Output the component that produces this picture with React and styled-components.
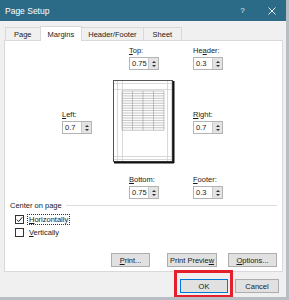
import styled, { createGlobalStyle } from 'styled-components';

const GlobalStyle = createGlobalStyle`
  html, body {
    margin: 0;
    padding: 0;
    background: #b9bec4;
  }
  body {
    font-family: "Liberation Sans", Arial, sans-serif;
    font-size: 7.5px;
    color: #1a1a1a;
  }
`;

const Dialog = styled.div`
  position: relative;
  width: 286px;
  height: 297px;
  background: #f0f0f0;
  display: flex;
  flex-direction: column;
  box-sizing: border-box;
`;

const TitleBar = styled.div`
  height: 21px;
  background: #2b6b87;
  color: #fff;
  display: flex;
  align-items: center;
  padding: 0 0 0 5px;
  font-size: 8.5px;
`;

const TitleText = styled.span`
  flex: 1;
`;

const TitleIcon = styled.span`
  width: 29px;
  display: flex;
  justify-content: center;
  color: #e6eef2;
  font-size: 8px;
`;

const Tabs = styled.div`
  display: flex;
  align-items: flex-end;
  height: 19px;
  padding-left: 5px;
`;

const Tab = styled.div`
  height: ${p => (p.$active ? '15px' : '13px')};
  padding: 0 ${p => p.$pad}px;
  display: flex;
  align-items: center;
  justify-content: center;
  background: ${p => (p.$active ? '#fff' : '#f0f0f0')};
  border: 1px solid #d9d9d9;
  border-bottom: none;
  margin-left: ${p => (p.$first ? '0' : '-1px')};
  box-sizing: border-box;
  position: relative;
  z-index: ${p => (p.$active ? 2 : 1)};
  margin-bottom: ${p => (p.$active ? '-1px' : '0')};
`;

const Panel = styled.div`
  margin: 0 4px;
  width: 279px;
  height: 232px;
  background: #fff;
  border: 1px solid #d9d9d9;
  box-sizing: border-box;
  display: flex;
  flex-direction: column;
`;

const MarginGrid = styled.div`
  display: grid;
  grid-template-columns: 51px 61px 19px auto;
  padding: 5px 0 0 57px;
`;

const Field = styled.div`
  display: flex;
  flex-direction: column;
  grid-column: ${p => p.$col};
  grid-row: ${p => p.$row || 'auto'};
  margin-left: ${p => p.$indent || 0}px;
  align-self: ${p => p.$align || 'start'};
  margin-top: ${p => p.$top || 0}px;
`;

const Label = styled.div`
  height: 10px;
  line-height: 10px;
`;

const Spinner = styled.div`
  margin-top: 1px;
  width: 30px;
  height: 13px;
  border: 1px solid #b4b4b4;
  box-sizing: border-box;
  display: flex;
`;

const SpinValue = styled.div`
  flex: 1;
  padding-left: 2px;
  line-height: 11px;
`;

const SpinArrows = styled.div`
  width: 9px;
  background: #e3e3e3;
  border-left: 1px solid #c8c8c8;
  display: flex;
  flex-direction: column;
  align-items: center;
  justify-content: center;
  gap: 2px;
`;

const Arrow = styled.span`
  width: 0;
  height: 0;
  border-left: 2px solid transparent;
  border-right: 2px solid transparent;
  ${p => (p.$down ? 'border-top: 2px solid #333;' : 'border-bottom: 2px solid #333;')}
`;

const Preview = styled.svg`
  grid-column: 2;
  grid-row: 2;
  margin-top: 10px;
  display: block;
`;

const Group = styled.div`
  margin-top: 1px;
  padding: 0 5px;
`;

const Legend = styled.div`
  display: flex;
  align-items: center;
  gap: 4px;
  height: 10px;
  &::after {
    content: '';
    flex: 1;
    height: 1px;
    background: #dcdcdc;
  }
`;

const CheckRow = styled.div`
  display: flex;
  align-items: center;
  gap: 3px;
  margin-left: 5px;
  margin-top: ${p => p.$top}px;
  height: 11px;
`;

const Box = styled.span`
  width: 9px;
  height: 9px;
  border: 1px solid #333;
  box-sizing: border-box;
  background: #fff;
  display: flex;
  align-items: center;
  justify-content: center;
`;

const CheckText = styled.span`
  padding: 0 1px;
  border: 1px dotted ${p => (p.$focus ? '#333' : 'transparent')};
  line-height: 9px;
`;

const ButtonRow = styled.div`
  display: flex;
  justify-content: flex-end;
  gap: ${p => p.$gap || 11}px;
  padding-right: ${p => p.$right}px;
  margin-top: ${p => p.$top}px;
`;

const Button = styled.div`
  width: ${p => p.$w}px;
  height: 14px;
  box-sizing: border-box;
  background: #e1e1e1;
  border: 1px solid ${p => (p.$primary ? '#0078d7' : '#adadad')};
  display: flex;
  align-items: center;
  justify-content: center;
  margin-left: ${p => p.$ml || 0}px;
`;

const U = styled.span`
  text-decoration: underline;
`;

const Highlight = styled.div`
  position: absolute;
  left: 174px;
  top: 270px;
  width: 59px;
  height: 28px;
  border: 3px solid #e3202c;
  box-sizing: border-box;
`;

function Spin({ value }) {
  return (
    <Spinner>
      <SpinValue>{value}</SpinValue>
      <SpinArrows>
        <Arrow />
        <Arrow $down />
      </SpinArrows>
    </Spinner>
  );
}

function PagePreview() {
  const cols = [9, 19.5, 30, 40.5, 51];
  const rows = Array.from({ length: 17 }, (_, i) => 11 + i * 2.45);
  return (
    <Preview width="62" height="84" viewBox="0 0 62 84">
      <rect x="0.5" y="0.5" width="59" height="81" fill="#fff" stroke="#555" />
      <line x1="60.5" y1="1" x2="60.5" y2="83" stroke="#111" strokeWidth="2" />
      <line x1="1" y1="82.5" x2="61" y2="82.5" stroke="#111" strokeWidth="2" />
      <g stroke="#cfcfcf" strokeWidth="0.8">
        <line x1="4.5" y1="1" x2="4.5" y2="81" />
        <line x1="9.5" y1="1" x2="9.5" y2="81" />
        <line x1="54.5" y1="1" x2="54.5" y2="81" />
        <line x1="58.5" y1="1" x2="58.5" y2="81" />
        <line x1="1" y1="3.5" x2="59" y2="3.5" />
        <line x1="1" y1="9.5" x2="59" y2="9.5" />
        <line x1="1" y1="76.5" x2="59" y2="76.5" />
        <line x1="1" y1="79.5" x2="59" y2="79.5" />
      </g>
      <g stroke="#9c9c9c" strokeWidth="0.6">
        {cols.map(x => (
          <line key={x} x1={x} y1="11" x2={x} y2="50.2" />
        ))}
        {rows.map(y => (
          <line key={y} x1="9" y1={y} x2="51" y2={y} />
        ))}
      </g>
    </Preview>
  );
}

export default function App() {
  return (
    <>
      <GlobalStyle />
      <Dialog>
        <TitleBar>
          <TitleText>Page Setup</TitleText>
          <TitleIcon>?</TitleIcon>
          <TitleIcon>
            <svg width="8" height="8" viewBox="0 0 8 8">
              <path d="M0.5 0.5L7.5 7.5M7.5 0.5L0.5 7.5" stroke="#e6eef2" strokeWidth="1" />
            </svg>
          </TitleIcon>
        </TitleBar>
        <Tabs>
          <Tab $first $pad={8}>Page</Tab>
          <Tab $active $pad={7}>Margins</Tab>
          <Tab $pad={6}>Header/Footer</Tab>
          <Tab $pad={9}>Sheet</Tab>
        </Tabs>
        <Panel>
          <MarginGrid>
            <Field $col={2} $indent={16}>
              <Label><U>T</U>op:</Label>
              <Spin value="0.75" />
            </Field>
            <Field $col={4}>
              <Label>He<U>a</U>der:</Label>
              <Spin value="0.3" />
            </Field>
            <Field $col={1} $row={2} $align="center" $top={10}>
              <Label><U>L</U>eft:</Label>
              <Spin value="0.7" />
            </Field>
            <PagePreview />
            <Field $col={4} $row={2} $align="center" $top={10}>
              <Label><U>R</U>ight:</Label>
              <Spin value="0.7" />
            </Field>
            <Field $col={2} $indent={16} $top={11}>
              <Label><U>B</U>ottom:</Label>
              <Spin value="0.75" />
            </Field>
            <Field $col={4} $top={11}>
              <Label><U>F</U>ooter:</Label>
              <Spin value="0.3" />
            </Field>
          </MarginGrid>
          <Group>
            <Legend>Center on page</Legend>
            <CheckRow $top={4}>
              <Box>
                <svg width="7" height="7" viewBox="0 0 7 7">
                  <path d="M0.8 3.6L2.7 5.6L6.3 1.2" fill="none" stroke="#222" strokeWidth="1" />
                </svg>
              </Box>
              <CheckText $focus><U>H</U>orizontally</CheckText>
            </CheckRow>
            <CheckRow $top={2}>
              <Box />
              <CheckText><U>V</U>ertically</CheckText>
            </CheckRow>
          </Group>
          <ButtonRow $top={15} $right={5}>
            <Button $w={39}><U>P</U>rint...</Button>
            <Button $w={50} $ml={6}>Print Previe<U>w</U></Button>
            <Button $w={49}><U>O</U>ptions...</Button>
          </ButtonRow>
        </Panel>
        <ButtonRow $top={7} $right={7} $gap={7}>
          <Button $w={48} $primary>OK</Button>
          <Button $w={44}>Cancel</Button>
        </ButtonRow>
        <Highlight />
      </Dialog>
    </>
  );
}
